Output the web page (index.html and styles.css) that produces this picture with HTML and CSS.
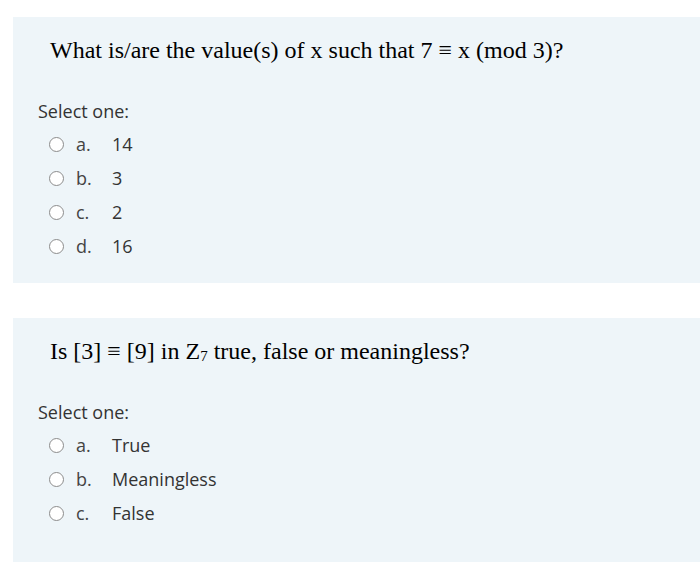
FILE: index.html
```html
<!DOCTYPE html>
<html>
<head>
<meta charset="utf-8">
<link rel="stylesheet" href="styles.css">
</head>
<body>
<div class="card card-first">
  <div class="qtext">What is/are the value(s) of x such that 7 ≡ x (mod 3)?</div>
  <div class="prompt">Select one:</div>
  <div class="answers">
    <div class="opt"><span class="radio"></span><span class="letter">a.</span><span class="val">14</span></div>
    <div class="opt"><span class="radio"></span><span class="letter">b.</span><span class="val">3</span></div>
    <div class="opt"><span class="radio"></span><span class="letter">c.</span><span class="val">2</span></div>
    <div class="opt"><span class="radio"></span><span class="letter">d.</span><span class="val">16</span></div>
  </div>
</div>
<div class="card card-second">
  <div class="qtext">Is [3] ≡ [9] in Z<sub>7</sub> true, false or meaningless?</div>
  <div class="prompt">Select one:</div>
  <div class="answers">
    <div class="opt"><span class="radio"></span><span class="letter">a.</span><span class="val">True</span></div>
    <div class="opt"><span class="radio"></span><span class="letter">b.</span><span class="val">Meaningless</span></div>
    <div class="opt"><span class="radio"></span><span class="letter">c.</span><span class="val">False</span></div>
  </div>
</div>
</body>
</html>
```
FILE: styles.css
```css
html, body {
  margin: 0;
  padding: 0;
  background: #ffffff;
}
body {
  overflow: hidden;
  width: 700px;
  height: 580px;
}
.card {
  margin-left: 13px;
  width: 700px;
  background: #eef5f9;
  padding: 18px 0 0 25px;
  box-sizing: border-box;
}
.card-first {
  margin-top: 17px;
  height: 266px;
}
.card-second {
  margin-top: 35px;
  height: 244px;
}
.qtext {
  margin-left: 12px;
  font-family: "Liberation Serif", "Times New Roman", serif;
  font-size: 24px;
  line-height: 30px;
  color: #000;
}
.qtext sub {
  font-size: 15px;
  line-height: 0;
  vertical-align: -2px;
}
.prompt {
  margin-top: 34px;
  font-family: "Open Sans", sans-serif;
  font-size: 18px;
  line-height: 24px;
  color: #333;
}
.answers {
  margin-top: 4px;
  padding-left: 11px;
  font-family: "Open Sans", sans-serif;
  font-size: 18px;
  color: #333;
}
.opt {
  display: flex;
  align-items: center;
  height: 34px;
}
.radio {
  width: 13px;
  height: 13px;
  border: 1.5px solid #8c8c8c;
  border-radius: 50%;
  background: #fff;
  margin-right: 12px;
  flex: none;
}
.letter {
  width: 36px;
  color: #444;
}
```
